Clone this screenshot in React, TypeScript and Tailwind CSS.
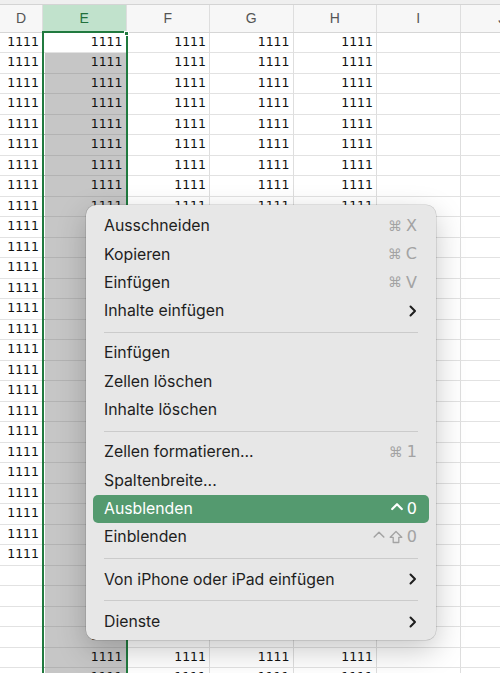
import React from "react";

const COLS = ["D", "E", "F", "G", "H", "I", "J"];
const ROW_COUNT = 32;

type MenuEntry =
  | { kind: "item"; label: string; shortcut?: string; submenu?: boolean; active?: boolean }
  | { kind: "sep" };

const menu: MenuEntry[] = [
  { kind: "item", label: "Ausschneiden", shortcut: "⌘X" },
  { kind: "item", label: "Kopieren", shortcut: "⌘C" },
  { kind: "item", label: "Einfügen", shortcut: "⌘V" },
  { kind: "item", label: "Inhalte einfügen", submenu: true },
  { kind: "sep" },
  { kind: "item", label: "Einfügen" },
  { kind: "item", label: "Zellen löschen" },
  { kind: "item", label: "Inhalte löschen" },
  { kind: "sep" },
  { kind: "item", label: "Zellen formatieren...", shortcut: "⌘1" },
  { kind: "item", label: "Spaltenbreite..." },
  { kind: "item", label: "Ausblenden", shortcut: "⌃0", active: true },
  { kind: "item", label: "Einblenden", shortcut: "⌃⇧0" },
  { kind: "sep" },
  { kind: "item", label: "Von iPhone oder iPad einfügen", submenu: true },
  { kind: "sep" },
  { kind: "item", label: "Dienste", submenu: true },
];

function Chevron() {
  return (
    <svg width="8" height="12" viewBox="0 0 8 12" fill="none">
      <path d="M1.5 1.5 L6 6 L1.5 10.5" stroke="#1e1e1e" strokeWidth="2" strokeLinecap="round" strokeLinejoin="round" />
    </svg>
  );
}

function ControlKey({ active }: { active?: boolean }) {
  return (
    <svg width="12" height="14" viewBox="0 0 12 14" fill="none">
      <path
        d="M1.2 7 L6 2.2 L10.8 7"
        stroke="currentColor"
        strokeWidth={active ? 2.2 : 1.5}
        strokeLinecap="round"
        strokeLinejoin="round"
      />
    </svg>
  );
}

function ShiftKey() {
  return (
    <svg width="14" height="14" viewBox="0 0 14 14" fill="none">
      <path d="M7 1.5 L12.8 7.3 H9.8 V12.5 H4.2 V7.3 H1.2 Z" stroke="currentColor" strokeWidth="1.3" strokeLinejoin="round" />
    </svg>
  );
}

function Shortcut({ text, active }: { text: string; active?: boolean }) {
  return (
    <span
      className={`flex items-center gap-[4px] text-[16px] ${active ? "text-white" : "text-[#a3a3a3]"}`}
      style={{ fontFamily: '"DejaVu Sans", Inter, sans-serif' }}
    >
      {Array.from(text).map((ch, i) => {
        if (ch === "⌃") return <ControlKey key={i} active={active} />;
        if (ch === "⇧") return <ShiftKey key={i} />;
        return (
          <span key={i} className={ch === "⌘" ? "text-[14px]" : ""}>
            {ch}
          </span>
        );
      })}
    </span>
  );
}

function ContextMenu() {
  return (
    <div
      className="absolute left-[86px] top-[205px] w-[350px] h-[435px] rounded-[10px] bg-[#e7e7e7] pt-[7px] pb-[5px] shadow-[0_10px_30px_rgba(0,0,0,0.22),0_0_0_0.5px_rgba(0,0,0,0.18)]"
      style={{ fontFamily: "Inter, 'Noto Sans', sans-serif" }}
    >
      {menu.map((m, i) =>
        m.kind === "sep" ? (
          <div key={i} className="h-[14px] flex items-center mx-[18px]">
            <div className="h-px w-full bg-[#cbcbcb]" />
          </div>
        ) : (
          <div
            key={i}
            className={`h-[28.3px] mx-[7px] pl-[11px] pr-[12px] flex items-center justify-between rounded-[5px] text-[15.8px] ${
              m.active ? "bg-[#549a6f] text-white" : "text-[#1e1e1e]"
            }`}
          >
            <span>{m.label}</span>
            {m.shortcut && <Shortcut text={m.shortcut} active={m.active} />}
            {m.submenu && <Chevron />}
          </div>
        )
      )}
    </div>
  );
}

export default function App() {
  const rows = Array.from({ length: ROW_COUNT }, (_, i) => i);

  return (
    <div className="relative w-[500px] h-[673px] overflow-hidden bg-white" style={{ fontFamily: '"DejaVu Sans", sans-serif' }}>
      {/* window strip above the column headers */}
      <div className="h-[5px] bg-[#efefef] border-b border-[#d4d4d4]" />

      {/* column headers */}
      <div className="flex h-[27.5px] bg-[#f7f7f7] border-b border-[#d6d6d6]">
        {COLS.map((c, ci) => (
          <div
            key={c}
            className={`shrink-0 h-full flex items-center justify-center border-r border-[#dedede] text-[14px] ${
              ci === 0 ? "w-[43px]" : "w-[83.5px]"
            } ${c === "E" ? "bg-[#c1e2cc] text-[#22703c]" : "text-[#555]"}`}
            style={{ fontFamily: '"Liberation Sans", Arial, sans-serif' }}
          >
            {c}
          </div>
        ))}
      </div>

      {/* cells */}
      {rows.map((r) => (
        <div key={r} className="flex h-[20.5px]">
          {COLS.map((c, ci) => {
            const hasValue = c === "D" ? r < 26 : ["E", "F", "G", "H"].includes(c);
            const selected = c === "E" && r > 0;
            return (
              <div
                key={c}
                className={`shrink-0 h-full border-r border-[#dedede] ${ci === 0 ? "w-[43px]" : "w-[83.5px]"} ${
                  selected ? "pl-[2px] border-b border-b-[#b3b3b3]" : "border-b border-b-[#e2e2e2]"
                }`}
              >
                <div
                  className={`h-full flex items-center justify-end pr-[3px] text-[12.5px] text-[#111] ${
                    selected ? "bg-[#c6c6c6]" : ""
                  }`}
                >
                  {hasValue ? "1111" : ""}
                </div>
              </div>
            );
          })}
        </div>
      ))}

      {/* column E selection outline and fill handle */}
      <div className="absolute left-[42px] top-[31px] w-[85.5px] h-[650px] border-2 border-b-0 border-[#217a3f]" />
      <div className="absolute left-[123.5px] top-[31px] w-[5px] h-[5px] bg-[#217a3f] border border-white" />

      <ContextMenu />
    </div>
  );
}
